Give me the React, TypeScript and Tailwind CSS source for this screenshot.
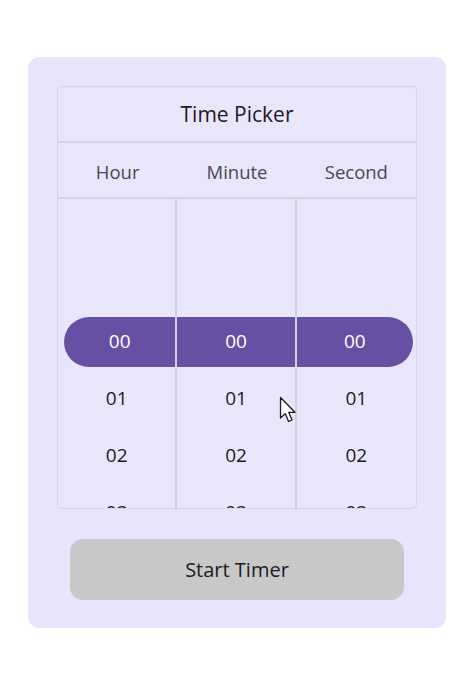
import { useState } from "react";

const columns = ["Hour", "Minute", "Second"] as const;
const values = ["", "", "00", "01", "02", "03"];

function Cursor() {
  return (
    <svg width="20" height="28" viewBox="0 0 20 28" className="pointer-events-none absolute left-[279px] top-[396px]">
      <path
        d="M1.5 1.5 L1.5 22 L6.2 17.6 L9.6 25.5 L13 24 L9.7 16.3 L16 16.3 Z"
        fill="#ffffff"
        stroke="#1a1a1a"
        strokeWidth="1.3"
        strokeLinejoin="round"
      />
    </svg>
  );
}

export default function App() {
  const [selected] = useState({ Hour: "00", Minute: "00", Second: "00" });

  return (
    <div
      className="relative min-h-[699px] w-[474px] bg-white pt-[57px]"
      style={{ fontFamily: '"Open Sans", "Noto Sans", sans-serif' }}
    >
      <div className="mx-[28px] rounded-[11px] bg-[#e8e4fc] px-[29px] pb-[28px] pt-[29px]">
        <div className="overflow-hidden rounded-[5px] border border-[#d7d3e6] bg-[#e9e5fb]">
          <div className="flex h-[56px] items-center justify-center border-b-2 border-[#d6d2e4] pt-[2px] text-[21px] text-[#1c1b22]">
            Time Picker
          </div>
          <div className="grid h-[56px] grid-cols-3 border-b-2 border-[#d6d2e4] pt-[3px] text-[18.5px] text-[#4a4852]">
            {columns.map((c) => (
              <div key={c} className="flex items-center justify-center">
                {c}
              </div>
            ))}
          </div>
          <div className="grid h-[309px] grid-cols-3 overflow-hidden">
            {columns.map((c, ci) => (
              <div
                key={c}
                className={`flex flex-col ${ci < 2 ? "border-r-2 border-[#d2cedd]" : ""}`}
              >
                {values.map((v, i) => {
                  const active = v !== "" && v === selected[c];
                  return (
                    <div key={i} className="flex h-[57px] shrink-0 items-center">
                      <div
                        className={`flex h-[50px] w-full items-center justify-center text-[19px] ${
                          active ? "bg-[#6750a4] text-white" : "text-[#1c1b22]"
                        } ${active && ci === 0 ? "ml-[6px] rounded-l-full" : ""} ${
                          active && ci === 2 ? "mr-[3px] rounded-r-full" : ""
                        }`}
                      >
                        {v}
                      </div>
                    </div>
                  );
                })}
              </div>
            ))}
          </div>
        </div>
        <div className="mt-[30px] px-[13px]">
          <button className="flex h-[61px] w-full items-center justify-center rounded-[13px] bg-[#c8c8c8] text-[20px] text-[#1c1b1f]">
            Start Timer
          </button>
        </div>
      </div>
      <Cursor />
    </div>
  );
}
